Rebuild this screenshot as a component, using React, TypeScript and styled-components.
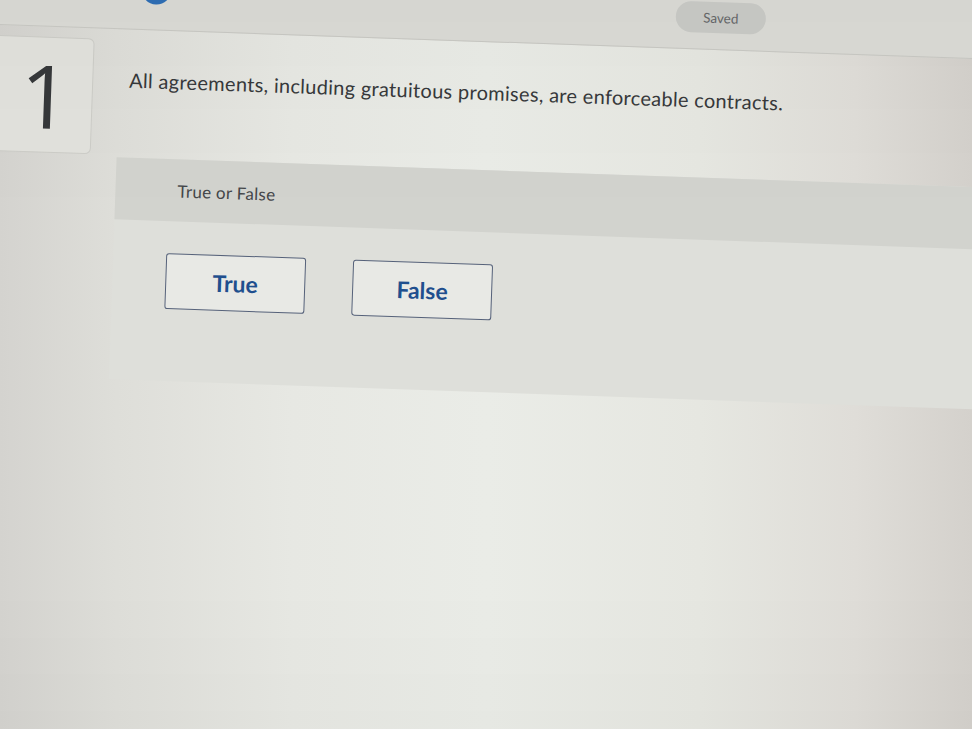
import React from "react";
import styled, { createGlobalStyle } from "styled-components";

const Global = createGlobalStyle`
  html, body { margin: 0; padding: 0; height: 100%; }
  body {
    overflow: hidden;
    font-family: Lato, "Open Sans", "Liberation Sans", sans-serif;
    background: linear-gradient(90deg, #d4d3cf 0%, #deded9 12%, #e7e8e3 30%, #eaece7 50%, #e6e7e1 72%, #dfddd8 88%, #d4d1cc 100%);
  }
  body::after {
    content: "";
    position: fixed;
    inset: 0;
    pointer-events: none;
    background: linear-gradient(180deg, rgba(0,0,0,0.02) 0%, rgba(0,0,0,0) 30%, rgba(0,0,0,0) 80%, rgba(0,0,0,0.015) 100%);
  }
`;

const Page = styled.div`
  width: 1150px;
  transform-origin: 600px 0;
  transform: translateY(-18px) rotate(2deg);
`;

const TopBar = styled.header`
  height: 64px;
  display: flex;
  align-items: center;
  background: #dbdbd6;
  border-bottom: 1px solid #c9c9c4;
  box-sizing: border-box;
`;

const Logo = styled.div`
  align-self: flex-start;
  margin-top: 8px;
  margin-left: 142px;
  width: 30px;
  height: 30px;
  border-radius: 50%;
  background: #2f6fb5;
`;

const SavedPill = styled.div`
  margin-left: 505px;
  width: 90px;
  height: 31px;
  border-radius: 16px;
  background: #c9cac6;
  color: #66686a;
  font-size: 13.5px;
  display: flex;
  align-items: center;
  justify-content: center;
`;

const QuestionRow = styled.section`
  display: flex;
  align-items: flex-start;
  padding-top: 10px;
`;

const NumberBox = styled.div`
  margin-left: -8px;
  width: 105px;
  height: 116px;
  box-sizing: border-box;
  padding-left: 10px;
  border: 1px solid #cdcdc8;
  border-radius: 6px;
  background: #e2e2dd;
  display: flex;
  align-items: center;
  justify-content: center;
  font-family: "Open Sans", "Liberation Sans", sans-serif;
  font-weight: 500;
  font-size: 88px;
  line-height: 1;
  color: #36383a;
`;

const QuestionText = styled.p`
  margin: 28px 0 0 36px;
  font-size: 20px;
  letter-spacing: 0.3px;
  line-height: 24px;
  color: #37393b;
`;

const Panel = styled.div`
  margin: 2px 0 0 123px;
  background: #dedfda;
`;

const PanelHeader = styled.div`
  height: 62px;
  display: flex;
  align-items: center;
  padding-left: 62px;
  background: #d2d3ce;
  font-size: 17px;
  letter-spacing: 0.3px;
  color: #45474a;
`;

const PanelBody = styled.div`
  display: flex;
  gap: 47px;
  padding: 32px 0 72px 53px;
`;

const ChoiceButton = styled.button`
  width: 140px;
  height: 56px;
  box-sizing: border-box;
  border: 1.5px solid #56627a;
  border-radius: 3px;
  background: #e8e9e5;
  color: #1f4f8e;
  font-family: Lato, "Open Sans", "Liberation Sans", sans-serif;
  font-weight: 700;
  font-size: 23px;
  cursor: pointer;
`;

export default function App() {
  return (
    <>
      <Global />
      <Page>
        <TopBar>
          <Logo />
          <SavedPill>Saved</SavedPill>
        </TopBar>
        <QuestionRow>
          <NumberBox>1</NumberBox>
          <QuestionText>
            All agreements, including gratuitous promises, are enforceable contracts.
          </QuestionText>
        </QuestionRow>
        <Panel>
          <PanelHeader>True or False</PanelHeader>
          <PanelBody>
            <ChoiceButton>True</ChoiceButton>
            <ChoiceButton>False</ChoiceButton>
          </PanelBody>
        </Panel>
      </Page>
    </>
  );
}
